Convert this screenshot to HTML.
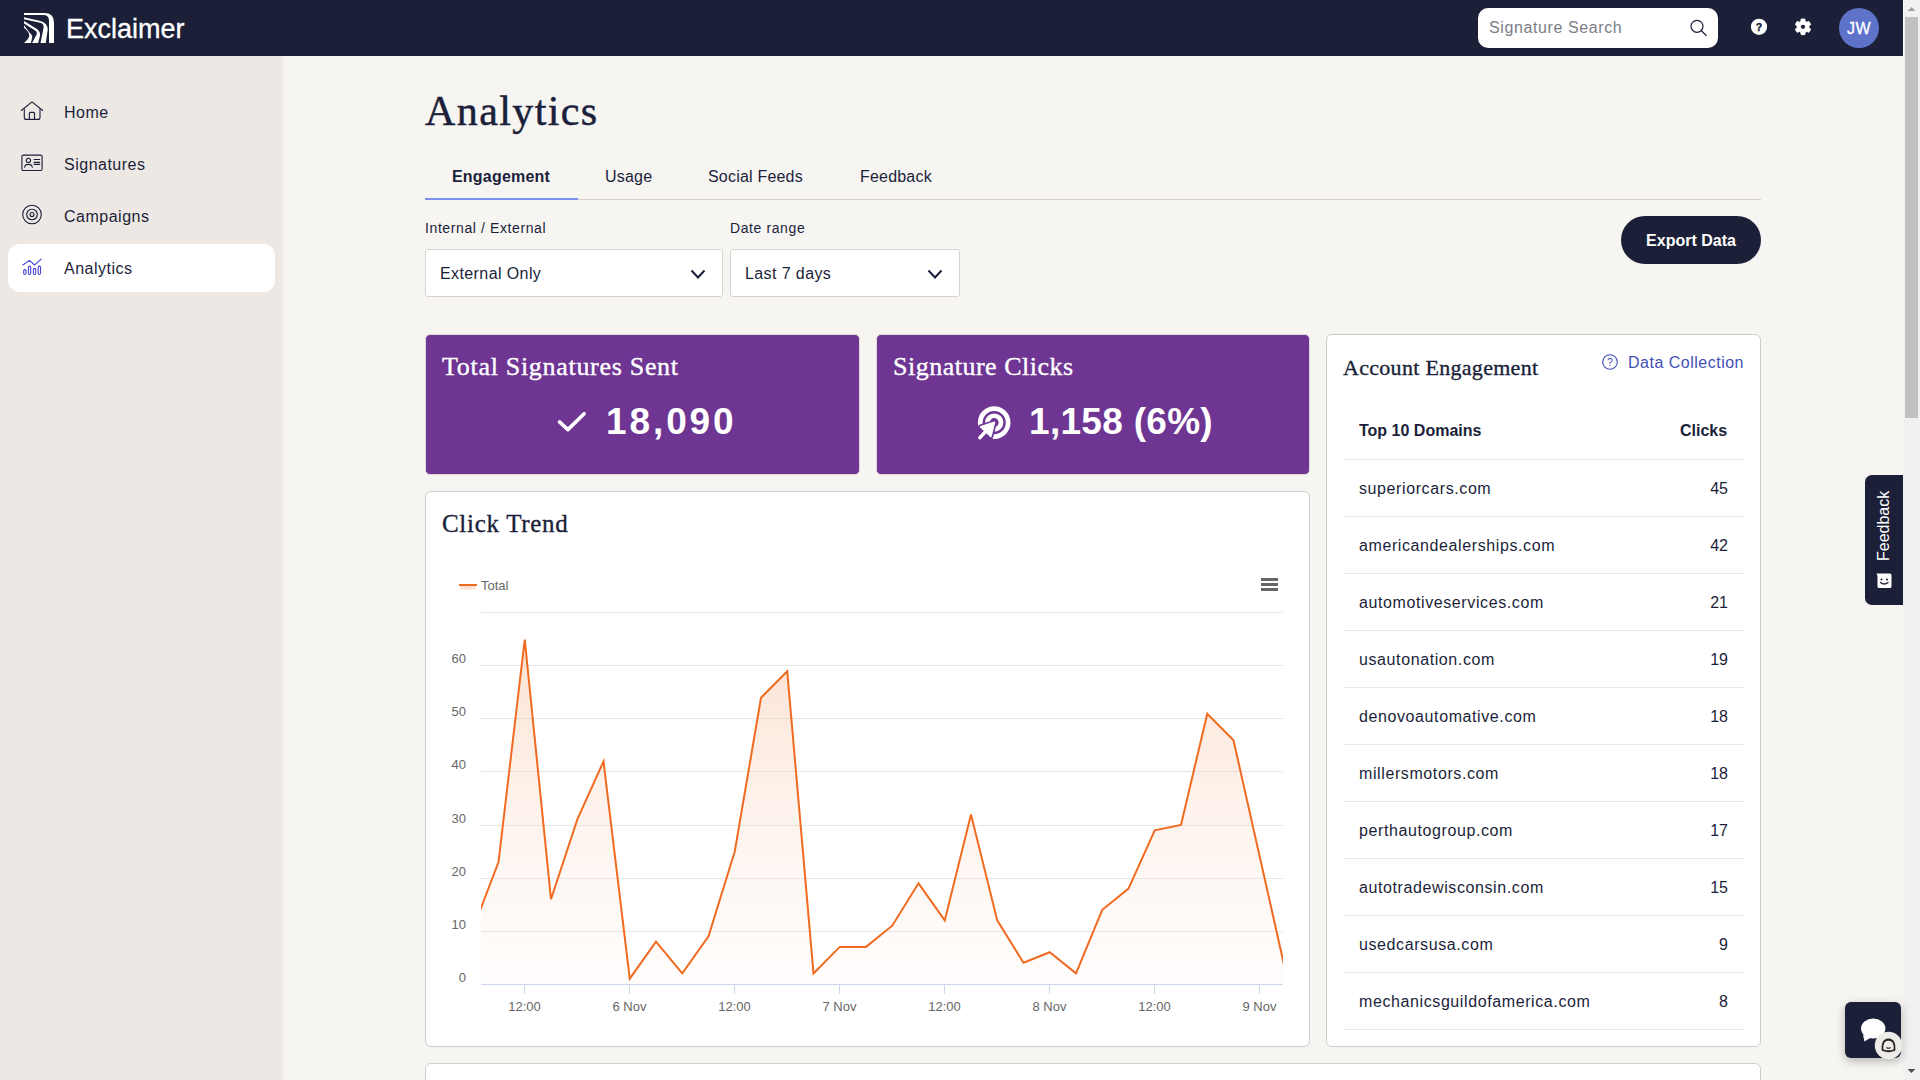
<!DOCTYPE html>
<html><head><meta charset="utf-8">
<style>
*{box-sizing:border-box;margin:0;padding:0}
html,body{width:1920px;height:1080px;overflow:hidden}
body{font-family:"Liberation Sans",sans-serif;background:#f6f5f2;color:#1b1f3a;position:relative}
.abs{position:absolute}
.serif{font-family:"Liberation Serif",serif;-webkit-text-stroke:0.35px currentColor}
#top{left:0;top:0;width:1903px;height:56px;background:#1b1f37}
#side{left:0;top:56px;width:283px;height:1024px;background:#ede8e3}
.nav{left:8px;width:267px;height:48px;border-radius:12px}
.nav .t{position:absolute;left:56px;top:2px;line-height:48px;font-size:16px;color:#1b1f3a;letter-spacing:0.5px}
.nav svg{position:absolute;left:13px;top:13px}
#scroll{left:1903px;top:0;width:17px;height:1080px;background:#f1f1f1}
.tab{top:166px;font-size:16px;line-height:22px;color:#1b1f3a;letter-spacing:0.2px}
.lbl{top:219px;font-size:14px;line-height:18px;color:#1b1f3a;letter-spacing:0.6px}
.sel{top:249px;height:48px;background:#fff;border:1px solid #d8d2cc;border-radius:3px}
.sel .t{position:absolute;left:14px;top:1px;line-height:46px;font-size:16px;letter-spacing:0.4px}
.sel svg{position:absolute;top:17px}
.card{background:#fff;border:1px solid #cdcdcd;border-radius:6px}
.pcard{background:#6e3593;border:1px solid #dcdad6;border-radius:5px;color:#fff}
.row{left:1343px;width:401px;height:57px;border-top:1px solid #e6e8ec}
.row .d{position:absolute;left:16px;top:1px;line-height:56px;font-size:16px;letter-spacing:0.6px}
.row .c{position:absolute;right:16px;top:1px;line-height:56px;font-size:16px}
</style></head><body>
<div id="top" class="abs">
  <svg class="abs" style="left:24px;top:13px" width="30" height="30" viewBox="0 0 30 30"><g fill="#fff">
<path d="M0,0 H20.5 Q30,0 30,9.5 V30 H25 V7.5 Q25,1.9 19.5,1.9 H0 Z"/>
<path d="M0,4.3 L15.5,7.8 Q23.9,9.8 23.7,17 L21.8,30 H16.5 L19.6,14.8 Q20.3,10.2 15,9.5 L0,6.3 Z"/>
<path d="M0,8.1 L12.2,15.6 Q16.6,18.6 16.1,22.4 L14.1,30 H8.1 L12.6,21.6 Q13.6,18.8 10.4,17.1 L0,10.4 Z"/>
<path d="M0,12.3 L5.5,19.4 Q8.8,22.3 8.2,24.5 L6.9,30 H0 Q5.2,25.5 5.3,22.5 Q5.4,20.4 3,17.6 L0,14.7 Z"/>
</g></svg>
  <div class="abs" style="left:66px;top:13px;font-size:27px;line-height:32px;color:#fff;-webkit-text-stroke:0.3px #fff">Exclaimer</div>
  <div class="abs" style="left:1478px;top:8px;width:240px;height:40px;background:#fff;border-radius:10px">
    <div class="abs" style="left:11px;top:0;line-height:40px;font-size:16px;color:#7b7d86;letter-spacing:0.6px">Signature Search</div>
    <svg class="abs" style="left:210px;top:10px" width="20" height="20" viewBox="0 0 20 20"><circle cx="9" cy="8.3" r="6" fill="none" stroke="#1b1f3a" stroke-width="1.2"/><path d="M13.3,12.6 L18.5,17.8" stroke="#1b1f3a" stroke-width="1.3"/></svg>
  </div>
  <svg class="abs" style="left:1749px;top:17px" width="20" height="20" viewBox="0 0 20 20"><circle cx="10" cy="9.85" r="8.1" fill="#fff"/><text x="10" y="13.9" text-anchor="middle" font-family="Liberation Sans" font-weight="bold" font-size="10.5" fill="#1b1f37" stroke="#1b1f37" stroke-width="0.4">?</text></svg>
  <svg class="abs" style="left:1793px;top:17px" width="20" height="20" viewBox="-10 -9.85 20 20"><path fill="#fff" fill-rule="evenodd" stroke="#fff" stroke-width="1" stroke-linejoin="round" d="M-2.11,-5.51 L-1.80,-7.79 L1.80,-7.79 L2.11,-5.51 L3.71,-4.59 L5.85,-5.46 L7.65,-2.34 L5.83,-0.92 L5.83,0.92 L7.65,2.34 L5.85,5.46 L3.71,4.59 L2.11,5.51 L1.80,7.79 L-1.80,7.79 L-2.11,5.51 L-3.71,4.59 L-5.85,5.46 L-7.65,2.34 L-5.83,0.92 L-5.83,-0.92 L-7.65,-2.34 L-5.85,-5.46 L-3.71,-4.59Z"/><circle cx="0" cy="0" r="2.1" fill="#1b1f37"/></svg>
  <div class="abs" style="left:1839px;top:8px;width:40px;height:40px;border-radius:50%;background:#5e72c9;color:#fff;font-size:16px;line-height:41px;text-align:center;letter-spacing:0.5px;-webkit-text-stroke:0.3px #fff">JW</div>
</div>
<div id="side" class="abs">
  <div class="abs nav" style="top:31px"><div class="t">Home</div></div>
  <div class="abs nav" style="top:83px"><div class="t">Signatures</div></div>
  <div class="abs nav" style="top:135px"><div class="t">Campaigns</div></div>
  <div class="abs nav" style="top:188px;background:#fff"><div class="t" style="top:1px">Analytics</div></div>
</div>
<div id="scroll" class="abs"><div class="abs" style="left:0;top:0;width:1px;height:56px;background:#fff"></div><div class="abs" style="left:2px;top:17px;width:13px;height:401px;background:#c1c1c1"></div>
<svg class="abs" style="left:0;top:0" width="17" height="17"><path d="M4.5,11 L8.5,7 L12.5,11Z" fill="#a3a3a3"/></svg>
<svg class="abs" style="left:0;top:1063px" width="17" height="17"><path d="M4.5,6 L8.5,10 L12.5,6Z" fill="#505050"/></svg></div>
<svg class="abs" style="left:16px;top:96px" width="32" height="32" viewBox="0 0 32 32"><g stroke="#1b1f3a" stroke-width="1.1" fill="none" stroke-linecap="round" stroke-linejoin="round"><path d="M5.3,14.5 L16,5.9 L26.7,14.5"/><path d="M8.3,13.2 V21.4 Q8.3,23.4 10.3,23.4 H22 Q24,23.4 24,21.4 V13.2"/><path d="M13.4,23.4 V17.4 Q13.4,16.4 14.4,16.4 H17.5 Q18.5,16.4 18.5,17.4 V23.4"/></g></svg>
<svg class="abs" style="left:16px;top:148px" width="32" height="32" viewBox="0 0 32 32"><g stroke="#1b1f3a" stroke-width="1.1" fill="none" stroke-linecap="round" stroke-linejoin="round"><rect x="5.9" y="7.1" width="20.2" height="15.4" rx="1.5"/><circle cx="12.4" cy="12.4" r="2.1"/><path d="M8.6,19.3 Q8.9,16.4 12.4,16.4 Q15.9,16.4 16.3,19.3"/><path d="M18.1,11.5 H23.7 M18.1,14.4 H23.7 M18.1,16.4 H23.7"/></g></svg>
<svg class="abs" style="left:16px;top:200px" width="32" height="32" viewBox="0 0 32 32"><g stroke="#1b1f3a" stroke-width="1.1" fill="none" stroke-linecap="round" stroke-linejoin="round"><circle cx="16" cy="14.5" r="9.3"/><circle cx="16" cy="14.5" r="5.3"/><circle cx="16" cy="14.5" r="2"/></g></svg>
<svg class="abs" style="left:16px;top:252px" width="32" height="32" viewBox="0 0 32 32"><g stroke="#4a46d8" stroke-width="1.1" fill="none" stroke-linecap="round" stroke-linejoin="round"><path d="M6.8,13 L13.5,8.4 L18.5,13 L25.2,7.1"/><rect x="7.7" y="17.6" width="2.3" height="4.9" rx="1.15"/><rect x="12.4" y="14.1" width="2.3" height="8.4" rx="1.15"/><rect x="17.4" y="16.4" width="2.3" height="6.1" rx="1.15"/><rect x="22.2" y="14.1" width="2.3" height="8.4" rx="1.15"/></g></svg>

<div class="abs serif" style="left:425px;top:86px;font-size:42px;line-height:50px;color:#1b1f3a;letter-spacing:1.4px;-webkit-text-stroke:0.5px #1b1f3a">Analytics</div>
<div class="abs" style="left:425px;top:199px;width:1336px;height:1px;background:#d6cfc8"></div>
<div class="abs" style="left:425px;top:198px;width:153px;height:2px;background:#7b8ff0"></div>
<div class="abs tab" style="left:452px;font-weight:bold">Engagement</div>
<div class="abs tab" style="left:605px">Usage</div>
<div class="abs tab" style="left:708px">Social Feeds</div>
<div class="abs tab" style="left:860px">Feedback</div>

<div class="abs lbl" style="left:425px">Internal / External</div>
<div class="abs lbl" style="left:730px">Date range</div>
<div class="abs sel" style="left:425px;width:298px"><div class="t">External Only</div><svg class="abs" style="left:264px;top:19px" width="16" height="11" viewBox="0 0 16 11"><path d="M1.5,1.5 L8,8.5 L14.5,1.5" fill="none" stroke="#1b1f3a" stroke-width="2"/></svg></div>
<div class="abs sel" style="left:730px;width:230px"><div class="t">Last 7 days</div><svg class="abs" style="left:196px;top:19px" width="16" height="11" viewBox="0 0 16 11"><path d="M1.5,1.5 L8,8.5 L14.5,1.5" fill="none" stroke="#1b1f3a" stroke-width="2"/></svg></div>
<div class="abs" style="left:1621px;top:216px;width:140px;height:48px;border-radius:24px;background:#1b1f37;color:#fff;font-weight:bold;font-size:16px;line-height:50px;text-align:center">Export Data</div>

<div class="abs pcard" style="left:425px;top:334px;width:435px;height:141px">
  <div class="abs serif" style="left:16px;top:17px;font-size:26px;line-height:30px;letter-spacing:0.7px">Total Signatures Sent</div>
  <svg class="abs" style="left:125px;top:65px" width="40" height="40" viewBox="0 0 40 40"><path d="M8.5,21.9 L16.9,29.6 L33.1,13.7" fill="none" stroke="#fff" stroke-width="3.6" stroke-linecap="round" stroke-linejoin="round"/></svg>
  <div class="abs" style="left:180px;top:65px;font-size:37px;line-height:44px;font-weight:bold;letter-spacing:2.9px">18,090</div>
</div>
<div class="abs pcard" style="left:876px;top:334px;width:434px;height:141px">
  <div class="abs serif" style="left:16px;top:17px;font-size:26px;line-height:30px;letter-spacing:0.5px">Signature Clicks</div>
  <svg class="abs" style="left:95px;top:66px" width="44" height="44" viewBox="0 0 44 44"><g fill="none" stroke="#fff" stroke-width="4.7"><circle cx="22.2" cy="21.6" r="13.95"/><circle cx="22.2" cy="21.6" r="6.85"/></g>
  <path d="M22.4,20.2 L5.5,25.6 L3,42 L20.2,42Z" fill="#6e3593"/><g stroke="#6e3593" stroke-width="5" stroke-linecap="round" stroke-linejoin="round" fill="#6e3593"><path d="M22.4,21.4 L8.8,25.9 L18.8,35.4Z"/><path d="M13,31.3 L7.8,36.7"/></g>
  <g stroke="#fff" stroke-width="1.8" stroke-linecap="round" stroke-linejoin="round" fill="#fff"><path d="M22.4,21.4 L8.8,25.9 L18.8,35.4Z"/></g><path d="M13,31.3 L7.8,36.7" stroke="#fff" stroke-width="3.4" stroke-linecap="round"/></svg>
  <div class="abs" style="left:152px;top:65px;font-size:37px;line-height:44px;font-weight:bold;letter-spacing:0.3px">1,158 (6%)</div>
</div>

<div class="abs card" style="left:425px;top:491px;width:885px;height:556px">
  <div class="abs serif" style="left:16px;top:17px;font-size:25px;line-height:30px;letter-spacing:0.7px">Click Trend</div>
</div>

<div class="abs card" style="left:1326px;top:334px;width:435px;height:713px">
  <div class="abs serif" style="left:16px;top:19px;font-size:22px;line-height:28px;letter-spacing:0.3px">Account Engagement</div>
  <svg class="abs" style="left:274px;top:18px" width="18" height="18" viewBox="0 0 18 18"><circle cx="9" cy="9" r="7.3" fill="none" stroke="#4350b5" stroke-width="1.1"/><text x="9" y="13" text-anchor="middle" font-family="Liberation Sans" font-size="10.5" fill="#4350b5">?</text></svg><div class="abs" style="left:301px;top:18px;font-size:16px;line-height:20px;color:#4350b5;letter-spacing:0.5px">Data Collection</div>
</div>
<div class="abs" style="left:1359px;top:421px;font-size:16px;line-height:20px;font-weight:bold">Top 10 Domains</div>
<div class="abs" style="left:1680px;top:421px;font-size:16px;line-height:20px;font-weight:bold">Clicks</div>
<div class="abs row" style="top:459px"><div class="d">superiorcars.com</div><div class="c">45</div></div>
<div class="abs row" style="top:516px"><div class="d">americandealerships.com</div><div class="c">42</div></div>
<div class="abs row" style="top:573px"><div class="d">automotiveservices.com</div><div class="c">21</div></div>
<div class="abs row" style="top:630px"><div class="d">usautonation.com</div><div class="c">19</div></div>
<div class="abs row" style="top:687px"><div class="d">denovoautomative.com</div><div class="c">18</div></div>
<div class="abs row" style="top:744px"><div class="d">millersmotors.com</div><div class="c">18</div></div>
<div class="abs row" style="top:801px"><div class="d">perthautogroup.com</div><div class="c">17</div></div>
<div class="abs row" style="top:858px"><div class="d">autotradewisconsin.com</div><div class="c">15</div></div>
<div class="abs row" style="top:915px"><div class="d">usedcarsusa.com</div><div class="c">9</div></div>
<div class="abs row" style="top:972px;height:58px;border-bottom:1px solid #e6e8ec"><div class="d">mechanicsguildofamerica.com</div><div class="c">8</div></div>

<div class="abs card" style="left:425px;top:1063px;width:1336px;height:40px"></div>

<!-- CHART -->
<svg class="abs" style="left:0;top:0" width="1920" height="1080" viewBox="0 0 1920 1080">
  <defs>
    <linearGradient id="g" x1="0" y1="0" x2="0" y2="1"><stop offset="0" stop-color="#f8c4a4" stop-opacity="0.5"/><stop offset="1" stop-color="#fde9df" stop-opacity="0.1"/></linearGradient>
    <clipPath id="cp"><rect x="481" y="600" width="802" height="390"/></clipPath>
  </defs>
  <g stroke="#e6e6e6" stroke-width="1">
    <line x1="481" y1="612.5" x2="1283" y2="612.5"/>
    <line x1="481" y1="665.5" x2="1283" y2="665.5"/>
    <line x1="481" y1="718.5" x2="1283" y2="718.5"/>
    <line x1="481" y1="771.5" x2="1283" y2="771.5"/>
    <line x1="481" y1="825.5" x2="1283" y2="825.5"/>
    <line x1="481" y1="878.5" x2="1283" y2="878.5"/>
    <line x1="481" y1="931.5" x2="1283" y2="931.5"/>
  </g>
  <g clip-path="url(#cp)">
    <polygon fill="url(#g)" points="472.25,984 472.25,931.00 498.50,862.10 524.75,639.50 551.00,899.20 577.25,819.70 603.50,761.40 629.75,978.70 656.00,941.60 682.25,973.40 708.50,936.30 734.75,851.50 761.00,697.80 787.25,671.30 813.50,973.40 839.75,946.90 866.00,946.90 892.25,925.70 918.50,883.30 944.75,920.40 971.00,814.40 997.25,920.40 1023.50,962.80 1049.75,952.20 1076.00,973.40 1102.25,909.80 1128.50,888.60 1154.75,830.30 1181.00,825.00 1207.25,713.70 1233.50,740.20 1259.75,856.80 1286.00,973.40 1286.00,984"/>
    <polyline fill="none" stroke="#f06b21" stroke-width="2" stroke-linejoin="miter" points="472.25,931.00 498.50,862.10 524.75,639.50 551.00,899.20 577.25,819.70 603.50,761.40 629.75,978.70 656.00,941.60 682.25,973.40 708.50,936.30 734.75,851.50 761.00,697.80 787.25,671.30 813.50,973.40 839.75,946.90 866.00,946.90 892.25,925.70 918.50,883.30 944.75,920.40 971.00,814.40 997.25,920.40 1023.50,962.80 1049.75,952.20 1076.00,973.40 1102.25,909.80 1128.50,888.60 1154.75,830.30 1181.00,825.00 1207.25,713.70 1233.50,740.20 1259.75,856.80 1286.00,973.40"/>
  </g>
  <line x1="481" y1="984.5" x2="1283" y2="984.5" stroke="#ccd6eb" stroke-width="1"/>
  <g stroke="#ccd6eb" stroke-width="1">
    <line x1="524.5" y1="985" x2="524.5" y2="994"/><line x1="629.5" y1="985" x2="629.5" y2="994"/>
    <line x1="734.5" y1="985" x2="734.5" y2="994"/><line x1="839.5" y1="985" x2="839.5" y2="994"/>
    <line x1="944.5" y1="985" x2="944.5" y2="994"/><line x1="1049.5" y1="985" x2="1049.5" y2="994"/>
    <line x1="1154.5" y1="985" x2="1154.5" y2="994"/><line x1="1259.5" y1="985" x2="1259.5" y2="994"/>
  </g>
  <g font-family="Liberation Sans" font-size="13" fill="#666" text-anchor="end">
    <text x="466" y="663">60</text><text x="466" y="716">50</text><text x="466" y="769">40</text>
    <text x="466" y="823">30</text><text x="466" y="876">20</text><text x="466" y="929">10</text><text x="466" y="982">0</text>
  </g>
  <g font-family="Liberation Sans" font-size="13" fill="#666" text-anchor="middle">
    <text x="524.5" y="1011">12:00</text><text x="629.5" y="1011">6 Nov</text><text x="734.5" y="1011">12:00</text><text x="839.5" y="1011">7 Nov</text>
    <text x="944.5" y="1011">12:00</text><text x="1049.5" y="1011">8 Nov</text><text x="1154.5" y="1011">12:00</text><text x="1259.5" y="1011">9 Nov</text>
  </g>
  <rect x="460" y="586" width="16" height="3.5" fill="#fde3d6"/><line x1="459" y1="585" x2="477" y2="585" stroke="#f06b21" stroke-width="2"/>
  <text x="481" y="590" font-family="Liberation Sans" font-size="13" fill="#666">Total</text>
  <g fill="#666"><rect x="1261" y="578" width="17" height="3"/><rect x="1261" y="583" width="17" height="3"/><rect x="1261" y="588" width="17" height="3"/></g>
</svg>

<div class="abs" style="left:1865px;top:475px;width:38px;height:130px;background:#1b1f37;border-radius:7px 0 0 7px">
  <div class="abs" style="left:-16px;top:41px;width:70px;height:20px;transform:rotate(-90deg);color:#fff;font-size:16px;line-height:20px;text-align:center">Feedback</div>
  <svg class="abs" style="left:10px;top:98px" width="18" height="16" viewBox="0 0 18 16"><path d="M1.5,0.5 H15 Q16.5,0.5 16.5,2 V13.5 Q16.5,15 15,15 H4 Q2.5,15 2.5,13.5 V3 Z" fill="#fff"/><circle cx="6.5" cy="6.5" r="1" fill="#1b1f37"/><circle cx="12" cy="6.5" r="1" fill="#1b1f37"/><path d="M5.5,9.5 Q9.2,12.5 13,9.5" fill="none" stroke="#1b1f37" stroke-width="1.4" stroke-linecap="round"/></svg>
</div>
<div class="abs" style="left:1845px;top:1002px;width:56px;height:56px;background:#1b1f37;border-radius:6px;box-shadow:0 3px 10px rgba(0,0,0,0.28)">
  <svg class="abs" style="left:0;top:0" width="56" height="56" viewBox="0 0 56 56"><ellipse cx="28.2" cy="26.6" rx="12.2" ry="10" fill="#fff"/><path d="M18,33 L19.5,39.6 L26,35.5Z" fill="#fff"/></svg>
</div>
<svg class="abs" style="left:1874px;top:1031px" width="29" height="29" viewBox="0 0 29 29"><circle cx="14.5" cy="14.5" r="13.7" fill="#ecebe7"/><path d="M8.5,19 Q7.5,9 14.5,8.5 Q21.5,9 20.5,19 Q14.5,21.5 8.5,19Z" fill="none" stroke="#231f1c" stroke-width="1.8"/><path d="M12.5,16.5 Q14.5,18 16.5,16.5" fill="none" stroke="#231f1c" stroke-width="1.2"/></svg>
</body></html>
